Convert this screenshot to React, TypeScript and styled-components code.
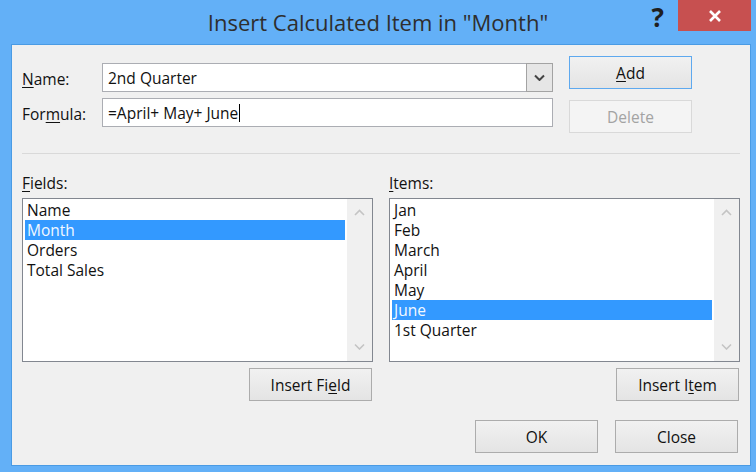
import styled, { createGlobalStyle } from "styled-components";

const GlobalStyle = createGlobalStyle`
  html, body {
    margin: 0;
    padding: 0;
    overflow: hidden;
  }
  body {
    font-family: "Open Sans", "Noto Sans", sans-serif;
    background: #ffffff;
  }
`;

const Window = styled.div`
  width: 756px;
  height: 472px;
  display: flex;
  flex-direction: column;
  background: #63b0f7;
  overflow: hidden;
`;

const TitleBar = styled.div`
  height: 44px;
  flex-shrink: 0;
  display: grid;
  grid-template-columns: 1fr auto 1fr;
  align-items: start;
`;

const Title = styled.div`
  grid-column: 2;
  padding-top: 7px;
  font-size: 22px;
  line-height: 30px;
  color: #2e2e2e;
  white-space: nowrap;
`;

const Controls = styled.div`
  grid-column: 3;
  justify-self: end;
  display: flex;
  align-items: flex-start;
  gap: 14px;
  padding-right: 5px;
`;

const HelpButton = styled.div`
  font-size: 26px;
  font-weight: 700;
  line-height: 34px;
  color: #1f1f1f;
`;

const CloseButton = styled.div`
  width: 73px;
  height: 31px;
  background: #c75050;
  display: flex;
  align-items: center;
  justify-content: center;
`;

const Client = styled.div`
  flex: 1;
  margin: 0 5px 6px 11px;
  border: 1px solid #4a9be4;
  background: #f0f0f0;
  padding: 11px 10px 0 10px;
  display: flex;
  flex-direction: column;
  color: #111111;
  font-size: 15.5px;
`;

const TopSection = styled.div`
  display: flex;
  align-items: flex-start;
  gap: 16px;
`;

const FormGrid = styled.div`
  margin-top: 7px;
  display: grid;
  grid-template-columns: 80px 451px;
  grid-auto-rows: 29px;
  row-gap: 6px;
`;

const Label = styled.div`
  align-self: end;
  margin-bottom: 3px;
  line-height: 20px;
  white-space: nowrap;
`;

const Mn = styled.span`
  text-decoration: underline;
  text-decoration-thickness: 1px;
  text-underline-offset: 2px;
`;

const TextBox = styled.div`
  box-sizing: border-box;
  height: 29px;
  border: 1px solid #abadb3;
  background: #ffffff;
  display: flex;
  align-items: center;
  padding-left: 5px;
  line-height: 20px;
  white-space: nowrap;
`;

const ComboBox = styled(TextBox)`
  align-items: stretch;
`;

const ComboText = styled.span`
  display: flex;
  align-items: center;
`;

const DropButton = styled.div`
  margin: -1px -1px -1px auto;
  width: 27px;
  box-sizing: border-box;
  border: 1px solid #a3a3a3;
  background: #e6e6e6;
  display: flex;
  align-items: center;
  justify-content: center;
`;

const Caret = styled.span`
  display: inline-block;
  width: 1px;
  height: 18px;
  margin-left: 1px;
  background: #000000;
  vertical-align: -4px;
`;

const ButtonColumn = styled.div`
  display: flex;
  flex-direction: column;
  gap: 11px;
`;

type ButtonProps = {
  $primary?: boolean;
};

const Button = styled.button<ButtonProps>`
  box-sizing: border-box;
  width: 123px;
  height: 33px;
  padding: 0;
  border: 1px solid ${({ $primary }) => ($primary ? "#5ea9ef" : "#acacac")};
  background: linear-gradient(#f1f1f1, #e4e4e4);
  font-family: inherit;
  font-size: 15.5px;
  color: #111111;

  &:disabled {
    border-color: #d9d9d9;
    background: #f4f4f4;
    color: #a3a3a3;
  }
`;

const Divider = styled.div`
  height: 1px;
  margin-top: 20px;
  background: #d9d9d9;
`;

const ListsRow = styled.div`
  margin-top: 19px;
  display: grid;
  grid-template-columns: 351px 351px;
  column-gap: 16px;
`;

const ListColumn = styled.div`
  display: flex;
  flex-direction: column;
`;

const ListLabel = styled.div`
  line-height: 20px;
  margin-bottom: 5px;
`;

const ListBox = styled.div`
  box-sizing: border-box;
  height: 164px;
  border: 1px solid #828790;
  background: #ffffff;
  display: flex;
`;

const Rows = styled.div`
  flex: 1;
  padding: 1px 2px 1px 2px;
  overflow: hidden;
`;

type RowProps = {
  $selected?: boolean;
};

const Row = styled.div<RowProps>`
  height: 20px;
  line-height: 20px;
  padding-left: 2px;
  white-space: nowrap;
  background: ${({ $selected }) => ($selected ? "#3399ff" : "transparent")};
  color: ${({ $selected }) => ($selected ? "#f2f8ff" : "#111111")};
`;

const ScrollTrack = styled.div`
  width: 25px;
  background: #f0f0f0;
  display: flex;
  flex-direction: column;
  justify-content: space-between;
  align-items: center;
  padding: 10px 0 11px;
`;

const ListAction = styled(Button)`
  align-self: flex-end;
  margin-top: 6px;
  margin-right: 1px;
`;

const Footer = styled.div`
  margin-top: 19px;
  padding-right: 2px;
  display: flex;
  justify-content: flex-end;
  gap: 17px;
`;

const Chevron = ({ up, color, width }: { up?: boolean; color: string; width: number }) => (
  <svg width="11" height="7" viewBox="0 0 11 7">
    <path
      d={up ? "M1 6 L5.5 1.5 L10 6" : "M1 1.5 L5.5 6 L10 1.5"}
      stroke={color}
      strokeWidth={width}
      fill="none"
    />
  </svg>
);

const fields = ["Name", "Month", "Orders", "Total Sales"];
const items = ["Jan", "Feb", "March", "April", "May", "June", "1st Quarter"];

const List = ({ entries, selected }: { entries: string[]; selected: string }) => (
  <ListBox>
    <Rows>
      {entries.map((e) => (
        <Row key={e} $selected={e === selected}>
          {e}
        </Row>
      ))}
    </Rows>
    <ScrollTrack>
      <Chevron up color="#c4c4c4" width={1.6} />
      <Chevron color="#c4c4c4" width={1.6} />
    </ScrollTrack>
  </ListBox>
);

export default function App() {
  return (
    <>
      <GlobalStyle />
      <Window>
        <TitleBar>
          <Title>Insert Calculated Item in "Month"</Title>
          <Controls>
            <HelpButton>?</HelpButton>
            <CloseButton>
              <svg width="14" height="12" viewBox="0 0 14 12">
                <path d="M2 1 L12 11 M12 1 L2 11" stroke="#ffffff" strokeWidth="2.6" fill="none" />
              </svg>
            </CloseButton>
          </Controls>
        </TitleBar>
        <Client>
          <TopSection>
            <FormGrid>
              <Label>
                <Mn>N</Mn>ame:
              </Label>
              <ComboBox>
                <ComboText>2nd Quarter</ComboText>
                <DropButton>
                  <Chevron color="#444444" width={2} />
                </DropButton>
              </ComboBox>
              <Label>
                For<Mn>m</Mn>ula:
              </Label>
              <TextBox>
                =April+ May+ June
                <Caret />
              </TextBox>
            </FormGrid>
            <ButtonColumn>
              <Button $primary>
                <Mn>A</Mn>dd
              </Button>
              <Button disabled>Delete</Button>
            </ButtonColumn>
          </TopSection>
          <Divider />
          <ListsRow>
            <ListColumn>
              <ListLabel>
                <Mn>F</Mn>ields:
              </ListLabel>
              <List entries={fields} selected="Month" />
              <ListAction>
                Insert Fi<Mn>e</Mn>ld
              </ListAction>
            </ListColumn>
            <ListColumn>
              <ListLabel>
                <Mn>I</Mn>tems:
              </ListLabel>
              <List entries={items} selected="June" />
              <ListAction>
                Insert I<Mn>t</Mn>em
              </ListAction>
            </ListColumn>
          </ListsRow>
          <Footer>
            <Button>OK</Button>
            <Button>Close</Button>
          </Footer>
        </Client>
      </Window>
    </>
  );
}
